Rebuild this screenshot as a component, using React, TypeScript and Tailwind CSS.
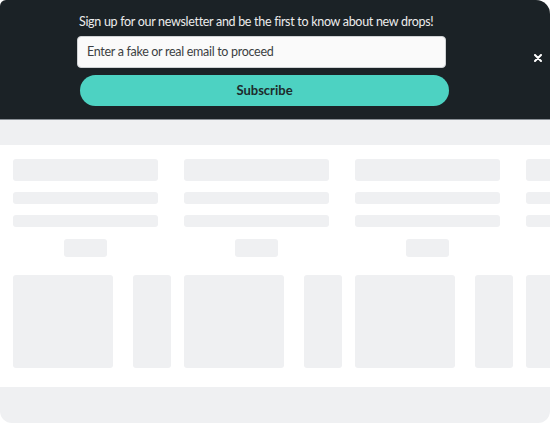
import React from "react";

function Col() {
  return (
    <div className="flex w-[145px] shrink-0 flex-col items-center">
      <div className="h-[22px] w-full rounded-[3px] bg-[#eff0f2]" />
      <div className="mt-[11px] h-[12px] w-full rounded-[3px] bg-[#eff0f2]" />
      <div className="mt-[11px] h-[12px] w-full rounded-[3px] bg-[#eff0f2]" />
      <div className="mt-[12px] h-[18px] w-[43px] rounded-[3px] bg-[#eff0f2]" />
    </div>
  );
}

function Pair() {
  return (
    <div className="flex shrink-0 gap-[20px]">
      <div className="h-[93px] w-[100px] shrink-0 rounded-[3px] bg-[#eff0f2]" />
      <div className="h-[93px] w-[38px] shrink-0 rounded-[3px] bg-[#eff0f2]" />
    </div>
  );
}

export default function App() {
  return (
    <div className="h-[423px] w-[550px] bg-white" style={{ fontFamily: "Lato, 'Noto Sans', sans-serif" }}>
      <div className="flex h-[423px] w-[550px] flex-col overflow-hidden rounded-b-[12px] rounded-tl-[6px] rounded-tr-[14px]">
        <div className="relative h-[120px] shrink-0 border-b border-[#8a9096] bg-[#1b2226]">
          <div className="ml-[77px] flex w-[372px] flex-col">
            <div className="mt-[13px] h-[18px] whitespace-nowrap pl-[2px] text-[12.5px] leading-[18px] tracking-[-0.3px] text-[#ececec]">
              Sign up for our newsletter and be the first to know about new drops!
            </div>
            <div className="mt-[5px] flex h-[32px] w-[369px] items-center whitespace-nowrap rounded-[4px] border border-[#cfd2d4] bg-[#fafafa] pl-[9px] text-[12.5px] tracking-[-0.3px] text-[#3c3f42]">
              Enter a fake or real email to proceed
            </div>
            <div className="ml-[3px] mt-[7px] flex h-[31px] w-[369px] items-center justify-center rounded-full bg-[#4dd2c2] text-[13px] font-bold text-[#1d2b2c]">
              Subscribe
            </div>
          </div>
          <svg className="absolute left-[534px] top-[54px]" width="8" height="8" viewBox="0 0 8 8">
            <path d="M1 1L7 7M7 1L1 7" stroke="#ffffff" strokeWidth="2" strokeLinecap="round" />
          </svg>
        </div>
        <div className="h-[25px] shrink-0 bg-[#eff0f2]" />
        <div className="flex shrink-0 gap-[26px] pl-[13px] pt-[14px]">
          <Col />
          <Col />
          <Col />
          <Col />
        </div>
        <div className="mt-[18px] flex shrink-0 gap-[13px] pl-[13px]">
          <Pair />
          <Pair />
          <Pair />
          <Pair />
        </div>
        <div className="mt-[19px] flex-1 bg-[#eff0f2]" />
      </div>
    </div>
  );
}
